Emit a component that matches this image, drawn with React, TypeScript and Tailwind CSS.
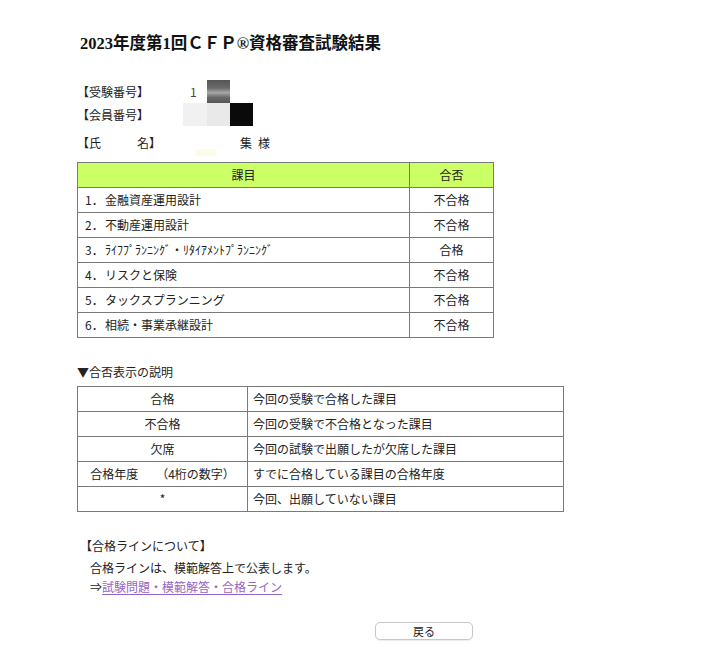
const subjects = [
  { no: "1．", name: "金融資産運用設計", result: "不合格" },
  { no: "2．", name: "不動産運用設計", result: "不合格" },
  { no: "3．", name: "ﾗｲﾌﾌﾟﾗﾝﾆﾝｸﾞ・ﾘﾀｲｱﾒﾝﾄﾌﾟﾗﾝﾆﾝｸﾞ", result: "合格" },
  { no: "4．", name: "リスクと保険", result: "不合格" },
  { no: "5．", name: "タックスプランニング", result: "不合格" },
  { no: "6．", name: "相続・事業承継設計", result: "不合格" }
]

const legend = [
  { mark: "合格", desc: "今回の受験で合格した課目" },
  { mark: "不合格", desc: "今回の受験で不合格となった課目" },
  { mark: "欠席", desc: "今回の試験で出願したが欠席した課目" },
  { mark: "合格年度　　（4桁の数字）", desc: "すでに合格している課目の合格年度" },
  { mark: "*", desc: "今回、出願していない課目" }
]

export default function App() {
  return (
    <div
      className="w-[716px] h-[656px] bg-white pl-[77px] pt-[32px] text-[12px] leading-none text-[#222] overflow-hidden"
      style={{ fontFamily: '"Noto Sans CJK JP", "Liberation Sans", sans-serif' }}
    >
      <h1
        className="ml-[3px] text-[16.5px] font-bold leading-[24px] text-[#111]"
        style={{ fontFamily: '"Liberation Serif", "Noto Sans CJK JP", serif' }}
      >
        2023年度第1回ＣＦＰ®資格審査試験結果
      </h1>

      <div className="mt-[24px] flex flex-col">
        <div className="flex items-center h-[23px]">
          <span className="w-[106px]">【受験番号】</span>
          <span className="w-[24px] pl-[7px] text-[12px] text-[#444]">1</span>
          <span
            className="w-[23px] h-[23px]"
            style={{ background: "linear-gradient(180deg, #555 0%, #6a6a6a 35%, #a8a8a8 55%, #6a6a6a 75%, #555 100%)" }}
          />
        </div>
        <div className="flex items-center h-[23px]">
          <span className="w-[106px]">【会員番号】</span>
          <span className="w-[24px] h-[23px] bg-[#f1f1f1]" />
          <span className="w-[23px] h-[23px] bg-[#e9e9e9]" />
          <span className="w-[23px] h-[23px] bg-[#0a0a0a]" />
        </div>
        <div className="flex items-center h-[34px] relative">
          <span className="w-[160px] whitespace-pre">【氏　　　名】</span>
          <span className="ml-[3px]">集</span>
          <span className="ml-[6px]">様</span>
          <span className="absolute left-[118px] top-[23px] w-[22px] h-[7px] rounded-full bg-[#fbfbe8]" />
        </div>
      </div>

      <table className="mt-[2px] border-collapse w-[416px] table-fixed">
        <colgroup>
          <col className="w-[332px]" />
          <col className="w-[84px]" />
        </colgroup>
        <thead>
          <tr className="h-[25px] bg-[#ccff66]">
            <th className="border border-[#7a7a7a] font-normal text-center">課目</th>
            <th className="border border-[#7a7a7a] font-normal text-center">合否</th>
          </tr>
        </thead>
        <tbody>
          {subjects.map((s, i) => (
            <tr key={i} className="h-[25px]">
              <td className="border border-[#7a7a7a] pl-[7px]">
                <span className="inline-block w-[20px]">{s.no}</span>
                {s.name}
              </td>
              <td className="border border-[#7a7a7a] text-center">{s.result}</td>
            </tr>
          ))}
        </tbody>
      </table>

      <p className="mt-[28px] text-[12px]">▼合否表示の説明</p>

      <table className="mt-[8px] border-collapse w-[486px] table-fixed">
        <colgroup>
          <col className="w-[170px]" />
          <col className="w-[316px]" />
        </colgroup>
        <tbody>
          {legend.map((l, i) => (
            <tr key={i} className="h-[25px]">
              <td className="border border-[#7a7a7a] text-center whitespace-pre">{l.mark}</td>
              <td className="border border-[#7a7a7a] pl-[5px]">{l.desc}</td>
            </tr>
          ))}
        </tbody>
      </table>

      <div className="mt-[28px] ml-[3px] flex flex-col">
        <p className="h-[12px]">【合格ラインについて】</p>
        <p className="mt-[10px] ml-[10px]">合格ラインは、模範解答上で公表します。</p>
        <p className="mt-[7px] ml-[10px]">
          ⇒<a className="text-[#9466c4] underline underline-offset-[2px]">試験問題・模範解答・合格ライン</a>
        </p>
      </div>

      <div className="mt-[29px] ml-[298px]">
        <button className="w-[98px] h-[18px] rounded-[5px] border border-[#c8c8c8] bg-white text-[11px] text-[#222] shadow-[0_1px_1px_rgba(0,0,0,0.08)]">
          戻る
        </button>
      </div>
    </div>
  )
}
